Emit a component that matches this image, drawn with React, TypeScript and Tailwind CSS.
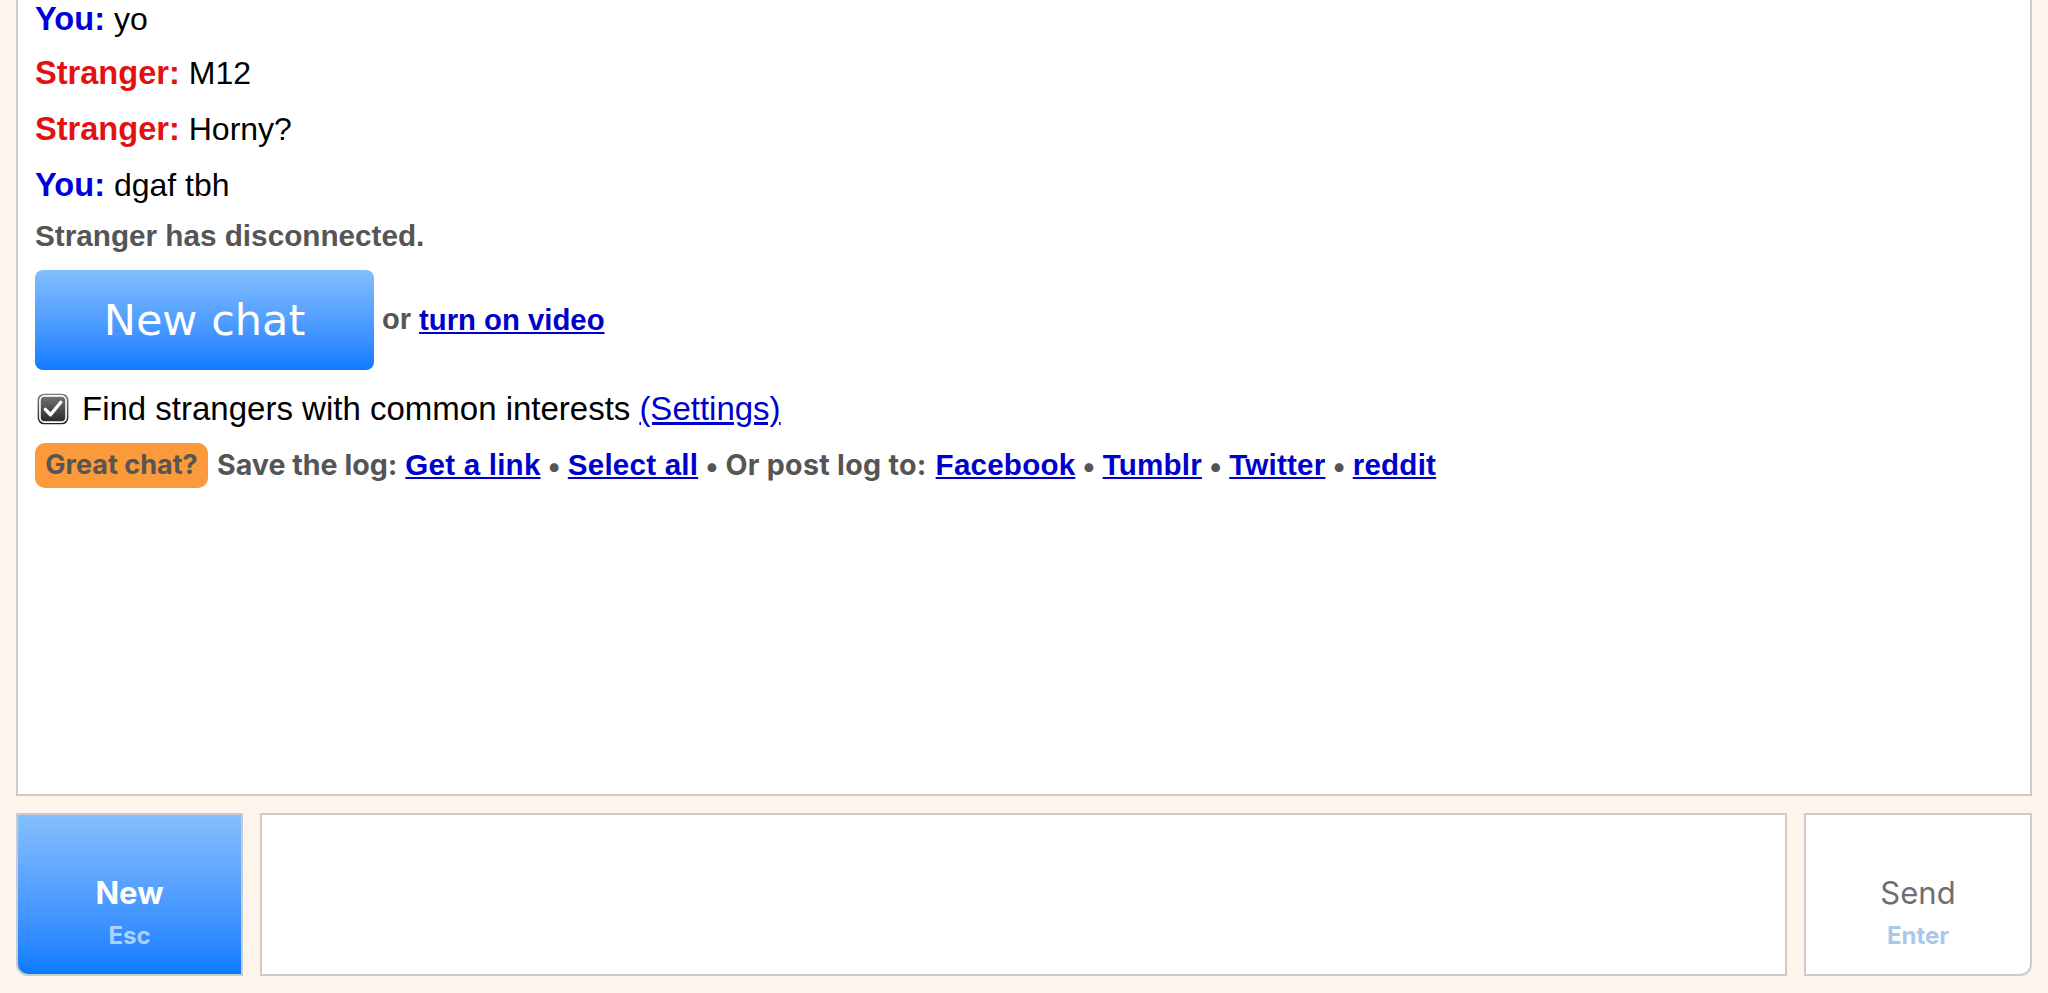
const sans = "font-['Liberation_Sans',Arial,sans-serif]";
const inter = "font-['Inter',sans-serif]";

type Line = { who: "You" | "Stranger"; text: string };

const lines: Line[] = [
  { who: "You", text: "yo" },
  { who: "Stranger", text: "M12" },
  { who: "Stranger", text: "Horny?" },
  { who: "You", text: "dgaf tbh" },
];

function LogLink({ children }: { children: React.ReactNode }) {
  return (
    <a href="#" className={`${sans} font-bold text-[29.6px] tracking-[0.2px] text-[#0000cc] underline`}>
      {children}
    </a>
  );
}

function Dot() {
  return <span className={`${inter} font-bold text-[28px] text-[#555] mx-[7px]`}>•</span>;
}

function Checkbox() {
  return (
    <svg width="32" height="32" viewBox="0 0 25 25" className="ml-[2px] shrink-0">
      <defs>
        <linearGradient id="cb" x1="0" y1="0" x2="0" y2="1">
          <stop offset="0" stopColor="#7a7a7a" />
          <stop offset="1" stopColor="#222" />
        </linearGradient>
      </defs>
      <rect x="0.5" y="0.5" width="24" height="24" rx="5" fill="url(#cb)" />
      <rect x="2.3" y="2.3" width="20.4" height="20.4" rx="3.5" fill="none" stroke="#fff" strokeWidth="1.3" />
      <path d="M6.5 12.8 L10.6 17 L18.6 7.2" fill="none" stroke="#fff" strokeWidth="2.6" strokeLinecap="round" strokeLinejoin="round" />
    </svg>
  );
}

export default function App() {
  return (
    <div className="h-[993px] w-full bg-[#fdf4eb] flex flex-col px-4 pb-[17px] overflow-hidden">
      <div className="flex-1 min-h-0 bg-white border-2 border-t-0 border-[#cfcac5] overflow-hidden">
        <div className="pl-[17px] pr-4 pt-[2px]">
          {lines.map((l, i) => (
            <p
              key={i}
              className={`${sans} text-[32px] leading-[34px] ${i === 0 ? "mb-[20px]" : "mb-[22px]"} text-black`}
            >
              <span className={`font-bold text-[32.6px] ${l.who === "You" ? "text-[#0000dd]" : "text-[#e31212]"}`}>
                {l.who}:
              </span>{" "}
              {l.text}
            </p>
          ))}
          <p className={`${sans} font-bold text-[29.7px] leading-[30px] -mt-[3px] text-[#555]`}>
            Stranger has disconnected.
          </p>

          <div className="flex items-center mt-[19px] h-[100px]">
            <button className="w-[339px] h-[100px] rounded-[8px] bg-linear-to-b from-[#82befd] to-[#0a7bff] text-white font-['DejaVu_Sans',sans-serif] text-[43px]">
              New chat
            </button>
            <span className={`${sans} font-bold text-[29px] text-[#555] ml-[8px] mr-[8px]`}>or</span>
            <a href="#" className={`${sans} font-bold text-[29.3px] text-[#0000cc] underline`}>
              turn on video
            </a>
          </div>

          <div className="flex items-center mt-[19px] h-[40px]">
            <Checkbox />
            <span className={`${sans} text-[33px] text-black ml-[13px]`}>
              Find strangers with common interests
            </span>
            <a href="#" className={`${sans} text-[33px] text-[#0000cc] underline ml-[9px]`}>
              (Settings)
            </a>
          </div>

          <div className="flex items-center mt-[14px] h-[45px] whitespace-nowrap">
            <span className={`${inter} font-bold text-[27px] text-[#555] bg-[#fb9a3a] rounded-[10px] h-[45px] w-[173px] flex items-center justify-center`}>
              Great chat?
            </span>
            <span className={`${inter} font-bold text-[28.6px] text-[#555] ml-[9px] mr-[8px]`}>Save the log:</span>
            <LogLink>Get a link</LogLink>
            <Dot />
            <LogLink>Select all</LogLink>
            <Dot />
            <span className={`${inter} font-bold text-[28.6px] text-[#555] tracking-[0.3px] mr-[9px]`}>Or post log to:</span>
            <LogLink>Facebook</LogLink>
            <Dot />
            <LogLink>Tumblr</LogLink>
            <Dot />
            <LogLink>Twitter</LogLink>
            <Dot />
            <LogLink>reddit</LogLink>
          </div>
        </div>
      </div>

      <div className="mt-[17px] h-[163px] flex gap-[17px] shrink-0">
        <button className="w-[227px] h-full border-2 border-[#c8ccd2] rounded-bl-[12px] bg-linear-to-b from-[#84bffd] to-[#067bff] flex flex-col items-center pt-[60px]">
          <span className={`${inter} font-bold text-[31px] leading-[36px] text-white`}>New</span>
          <span className={`${inter} font-bold text-[24px] leading-[28px] mt-[11px] text-white/60`}>Esc</span>
        </button>
        <div className="flex-1 h-full bg-white border-2 border-[#cfcac5]" />
        <button className="w-[228px] h-full bg-white border-2 border-[#cfcac5] rounded-br-[12px] flex flex-col items-center pt-[60px]">
          <span className={`${inter} text-[31px] leading-[36px] text-[#6f6f6f]`}>Send</span>
          <span className={`${inter} font-bold text-[24px] leading-[28px] mt-[11px] text-[#a9c8ea]`}>Enter</span>
        </button>
      </div>
    </div>
  );
}
